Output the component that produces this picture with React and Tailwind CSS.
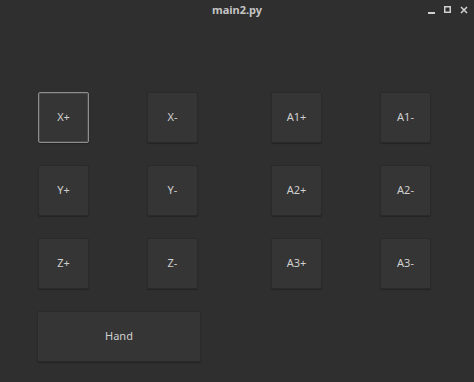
const Btn = ({ label, focused, wide }) => (
  <div
    className={`flex items-center justify-center h-[51px] ${wide ? 'w-[164px] -ml-px' : 'w-[51px]'} rounded-[2px] border bg-[#353535] text-[11px] text-[#cfcfcf] shadow-[0_1px_1px_rgba(0,0,0,0.25)] ${
      focused ? 'border-[#8e8e8e] ring-1 ring-inset ring-[#4a4a4a]' : 'border-[#2a2a2a]'
    }`}
  >
    {label}
  </div>
);

const Row = ({ items }) => (
  <div className="flex">
    <div className="flex gap-[58px]">
      <Btn label={items[0]} focused={items[0] === 'X+'} />
      <Btn label={items[1]} />
    </div>
    <div className="flex gap-[58px] ml-[73px]">
      <Btn label={items[2]} />
      <Btn label={items[3]} />
    </div>
  </div>
);

const App = () => {
  const rows = [
    ['X+', 'X-', 'A1+', 'A1-'],
    ['Y+', 'Y-', 'A2+', 'A2-'],
    ['Z+', 'Z-', 'A3+', 'A3-'],
  ];

  return (
    <div
      className="w-[474px] h-[382px] bg-[#2f2f2f] overflow-hidden"
      style={{ fontFamily: '"Noto Sans", "DejaVu Sans", sans-serif' }}
    >
      <div className="relative h-[22px] flex items-center justify-center">
        <span className="text-[11px] font-bold text-[#c4c4c4] -mt-[2px]">main2.py</span>
        <div className="absolute right-[6px] top-0 h-[20px] flex items-center gap-[9px] text-[#d0d0d0]">
          <svg width="7" height="8" viewBox="0 0 7 8">
            <rect x="0" y="6" width="7" height="2" fill="currentColor" />
          </svg>
          <svg width="7" height="8" viewBox="0 0 7 8">
            <rect x="0.75" y="0.75" width="5.5" height="5.5" fill="none" stroke="currentColor" strokeWidth="1.5" />
          </svg>
          <svg width="8" height="8" viewBox="0 0 8 8">
            <path d="M1 1L7 7M7 1L1 7" stroke="currentColor" strokeWidth="1.6" />
          </svg>
        </div>
      </div>
      <div className="pl-[38px] pt-[70px] flex flex-col gap-[22px]">
        {rows.map((r) => (
          <Row key={r[0]} items={r} />
        ))}
        <div className="flex">
          <Btn label="Hand" wide />
        </div>
      </div>
    </div>
  );
};

export default App;
